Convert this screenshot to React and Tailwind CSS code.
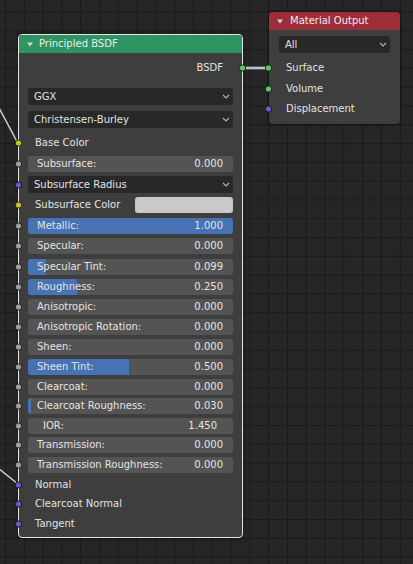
import React from "react";

const SOCKET = {
  yellow: "bg-[#c7c729]",
  gray: "bg-[#a1a1a1]",
  purple: "bg-[#6363c7]",
  green: "bg-[#63c763]",
};

const H = { 19: "h-[19px]", 20: "h-5", 21: "h-[21px]" };

function Socket({ color, side = "left" }) {
  return (
    <span
      className={`absolute top-1/2 -translate-y-1/2 w-[7px] h-[7px] rounded-full border border-black/70 ${SOCKET[color]} ${
        side === "left" ? "left-[-4px]" : "right-[-4px]"
      }`}
    />
  );
}

function Chevron() {
  return (
    <svg width="8" height="5" viewBox="0 0 8 5" className="shrink-0">
      <path d="M1 1 L4 4 L7 1" fill="none" stroke="#b4b4b4" strokeWidth="1.1" />
    </svg>
  );
}

function Triangle() {
  return (
    <svg width="6" height="5" viewBox="0 0 6 5" className="shrink-0">
      <path d="M0 0.5 L6 0.5 L3 4.5 Z" fill="#d8d8d8" />
    </svg>
  );
}

function Dropdown({ label, className = "" }) {
  return (
    <div className={`h-[17px] rounded-[3px] bg-[#282828] flex items-center justify-between pl-[6px] pr-[3px] text-[#e2e2e2] ${className}`}>
      <span>{label}</span>
      <Chevron />
    </div>
  );
}

const rows = [
  { t: "input", label: "Base Color", s: "yellow", h: 20 },
  { t: "slider", label: "Subsurface:", val: "0.000", v: 0, h: 21 },
  { t: "dropdown", label: "Subsurface Radius", s: "purple", h: 21 },
  { t: "color", label: "Subsurface Color", s: "yellow", h: 20 },
  { t: "slider", label: "Metallic:", val: "1.000", v: 1, h: 21 },
  { t: "slider", label: "Specular:", val: "0.000", v: 0, h: 20 },
  { t: "slider", label: "Specular Tint:", val: "0.099", v: 0.099, h: 21 },
  { t: "slider", label: "Roughness:", val: "0.250", v: 0.25, h: 20 },
  { t: "slider", label: "Anisotropic:", val: "0.000", v: 0, h: 20 },
  { t: "slider", label: "Anisotropic Rotation:", val: "0.000", v: 0, h: 20 },
  { t: "slider", label: "Sheen:", val: "0.000", v: 0, h: 20 },
  { t: "slider", label: "Sheen Tint:", val: "0.500", v: 0.5, h: 20 },
  { t: "slider", label: "Clearcoat:", val: "0.000", v: 0, h: 19 },
  { t: "slider", label: "Clearcoat Roughness:", val: "0.030", v: 0.03, h: 20 },
  { t: "number", label: "IOR:", val: "1.450", h: 19 },
  { t: "slider", label: "Transmission:", val: "0.000", v: 0, h: 20 },
  { t: "slider", label: "Transmission Roughness:", val: "0.000", v: 0, h: 20 },
  { t: "input", label: "Normal", s: "purple", h: 19 },
  { t: "input", label: "Clearcoat Normal", s: "purple", h: 20 },
  { t: "input", label: "Tangent", s: "purple", h: 20 },
];

function Row({ r }) {
  const socket = r.s || "gray";
  let content;
  if (r.t === "input") {
    content = <span className="pl-[7px] text-[#e2e2e2]">{r.label}</span>;
  } else if (r.t === "dropdown") {
    content = <Dropdown label={r.label} className="w-full h-4" />;
  } else if (r.t === "color") {
    content = (
      <div className="w-full flex items-center">
        <span className="pl-[7px] flex-1 text-[#e2e2e2]">{r.label}</span>
        <span className="w-[98px] h-4 rounded-[3px] bg-[#cbc8c8]" />
      </div>
    );
  } else if (r.t === "number") {
    content = (
      <div className="w-full h-4 rounded-[3px] bg-[#545454] flex items-center justify-between pl-[15px] pr-[16px] text-[#e4e4e4]">
        <span>{r.label}</span>
        <span>{r.val}</span>
      </div>
    );
  } else {
    const fill = Math.min(205, Math.max(0, 208 * r.v - 3));
    content = (
      <div className="relative w-full h-4 rounded-[3px] bg-[#545454] overflow-hidden text-[#e4e4e4]">
        {fill > 0 && (
          <div className="absolute left-0 top-0 bottom-0 bg-[#4772b3]" style={{ width: `${fill}px` }} />
        )}
        <div className="relative h-full flex items-center justify-between pl-[9px] pr-[10px]">
          <span>{r.label}</span>
          <span>{r.val}</span>
        </div>
      </div>
    );
  }
  return (
    <div className={`relative ${H[r.h]} px-[9px] flex items-center`}>
      <Socket color={socket} />
      {content}
    </div>
  );
}

export default function App() {
  return (
    <div className="relative w-[413px] h-[564px] overflow-hidden bg-[#262626] [background-image:linear-gradient(to_right,#1a1a1a_1px,transparent_1px),linear-gradient(to_bottom,#1a1a1a_1px,transparent_1px)] [background-size:18.8px_18.8px] [background-position:5px_11.5px] font-['DejaVu_Sans',sans-serif] text-[10px] leading-none">
      {/* links */}
      <svg className="absolute inset-0" width="413" height="564" viewBox="0 0 413 564">
        <path d="M-2 106 L13 134 Q16 140 18 143" fill="none" stroke="#d6d6d6" strokeWidth="1.5" />
        <path d="M-2 468 L18 484" fill="none" stroke="#d6d6d6" strokeWidth="1.5" />
        <line x1="243" y1="68" x2="269" y2="68" stroke="#8e8e8e" strokeWidth="3" />
        <line x1="243" y1="68" x2="269" y2="68" stroke="#d8d8d8" strokeWidth="1.4" />
      </svg>

      {/* Principled BSDF */}
      <div className="absolute left-[18px] top-[34px] w-[225px] rounded-[4px] border border-[#e6e6e6] bg-[#3e3e3e] shadow-[0_0_4px_rgba(0,0,0,0.5)]">
        <div className="h-[18px] rounded-t-[3px] bg-[#2e9461] flex items-center gap-[6px] pl-[8px] text-[#ececec]">
          <Triangle />
          <span>Principled BSDF</span>
        </div>
        <div className="pt-[5px] pb-[3px]">
          <div className="relative h-5 flex items-center justify-end pr-[19px] text-[#e2e2e2]">
            <span>BSDF</span>
            <Socket color="green" side="right" />
          </div>
          <div className="px-[9px] mt-[10px] flex flex-col gap-[6px]">
            <Dropdown label="GGX" />
            <Dropdown label="Christensen-Burley" />
          </div>
          <div className="mt-[5px]">
            {rows.map((r) => (
              <Row key={r.label} r={r} />
            ))}
          </div>
        </div>
      </div>

      {/* Material Output */}
      <div className="absolute left-[269px] top-[12px] w-[131px] rounded-[4px] bg-[#3e3e3e] shadow-[0_0_3px_rgba(0,0,0,0.8)]">
        <div className="h-[18px] rounded-t-[4px] bg-[#9c2e3a] flex items-center gap-[7px] pl-[8px] text-[#ececec]">
          <Triangle />
          <span>Material Output</span>
        </div>
        <div className="pt-[6px] pb-[5px]">
          <div className="px-[10px]">
            <Dropdown label="All" />
          </div>
          <div className="mt-[5px]">
            {[
              ["Surface", "green", "h-5"],
              ["Volume", "green", "h-[21px]"],
              ["Displacement", "purple", "h-5"],
            ].map(([l, c, h]) => (
              <div key={l} className={`relative ${h} flex items-center pl-[17px] text-[#e2e2e2]`}>
                <Socket color={c} />
                <span>{l}</span>
              </div>
            ))}
          </div>
        </div>
      </div>
    </div>
  );
}
